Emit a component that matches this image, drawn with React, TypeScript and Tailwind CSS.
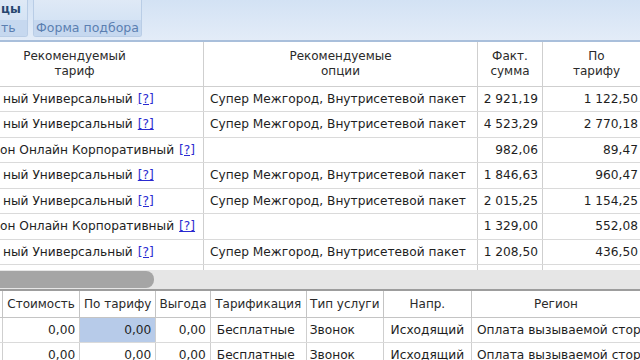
import React from "react";

const opts = "Супер Межгород, Внутрисетевой пакет";
const univ = "ный Универсальный";
const online = "он Онлайн Корпоративный";

const rows = [
  { t: univ, o: opts, f: "2 921,19", p: "1 122,50" },
  { t: univ, o: opts, f: "4 523,29", p: "2 770,18" },
  { t: online, o: "", f: "982,06", p: "89,47" },
  { t: univ, o: opts, f: "1 846,63", p: "960,47" },
  { t: univ, o: opts, f: "2 015,25", p: "1 154,25" },
  { t: online, o: "", f: "1 329,00", p: "552,08" },
  { t: univ, o: opts, f: "1 208,50", p: "436,50" },
];

const font = { fontFamily: "Tahoma, 'DejaVu Sans', sans-serif" };

function Ribbon() {
  return (
    <div className="h-[42px] flex items-start gap-[5px] bg-gradient-to-b from-[#d3e2f4] to-[#e3ecf8] border-b-2 border-[#a9bfdb]">
      <div className="w-[28px] h-[37px] flex flex-col justify-between rounded-br-[3px] bg-gradient-to-b from-[#dfe9f6] to-[#cddff3] border-r border-b border-[#b9cde6] overflow-hidden">
        <div className="text-[12px] font-bold text-[#27466f] leading-none pt-[3px] pl-[1px]">цы</div>
        <div className="h-[16px] bg-[#c6d8ef] text-[12.5px] text-[#5b7fb1] leading-[16px] pl-[1px]">ть</div>
      </div>
      <div className="w-[109px] h-[37px] flex flex-col justify-end rounded-b-[3px] bg-gradient-to-b from-[#dfe9f6] to-[#cddff3] border-x border-b border-[#b9cde6] overflow-hidden">
        <div className="h-[16px] bg-[#c6d8ef] text-[12.5px] text-[#5b7fb1] leading-[16px] text-center">Форма подбора</div>
      </div>
    </div>
  );
}

function MainTable() {
  return (
    <div className="h-[228px] overflow-hidden bg-white">
      <div className="-ml-[54px] w-[760px]">
        <div className="flex h-[45px] border-b border-[#cfcfcf] text-[12px] leading-[15px] text-[#2a2a2a] text-center">
          <div className="w-[258px] flex items-center justify-center border-r border-[#cfcfcf]">Рекомендуемый<br />тариф</div>
          <div className="w-[274px] flex items-center justify-center border-r border-[#cfcfcf]">Рекомендуемые<br />опции</div>
          <div className="w-[65px] flex items-center justify-center border-r border-[#cfcfcf]">Факт.<br />сумма</div>
          <div className="w-[108px] flex items-center justify-center border-r border-[#cfcfcf]">По<br />тарифу</div>
        </div>
        {rows.map((r, i) => (
          <div
            key={i}
            className={`flex border-b border-[#dadada] text-[12.2px] text-[#1e1e1e] ${i % 2 === 0 ? "h-[25px]" : "h-[26px]"}`}
          >
            <div className={`w-[258px] flex items-center border-r border-[#cfcfcf] whitespace-nowrap ${r.t === univ ? "pl-[57px]" : "pl-[54px]"}`}>
              {r.t}
              <span className="ml-[5px] text-[#2a2ad0] underline">[?]</span>
            </div>
            <div className="w-[274px] flex items-center pl-[6px] border-r border-[#cfcfcf] whitespace-nowrap">{r.o}</div>
            <div className="w-[65px] flex items-center justify-end pr-[4px] border-r border-[#cfcfcf]">{r.f}</div>
            <div className="w-[108px] flex items-center justify-end pr-[12px] border-r border-[#cfcfcf]">{r.p}</div>
          </div>
        ))}
        <div className="flex h-[10px]">
          <div className="w-[258px] border-r border-[#cfcfcf]" />
          <div className="w-[274px] border-r border-[#cfcfcf]" />
          <div className="w-[65px] border-r border-[#cfcfcf]" />
          <div className="w-[108px] border-r border-[#cfcfcf]" />
        </div>
      </div>
    </div>
  );
}

const bottomCols = [
  { w: "w-[3px]", h: "" },
  { w: "w-[78px]", h: "Стоимость" },
  { w: "w-[77px]", h: "По тарифу" },
  { w: "w-[55px]", h: "Выгода" },
  { w: "w-[97px]", h: "Тарификация" },
  { w: "w-[78px]", h: "Тип услуги" },
  { w: "w-[89px]", h: "Напр." },
  { w: "w-[170px]", h: "Регион" },
];

function BottomRow({ hl }: { hl: boolean }) {
  return (
    <div className="flex h-[25px] border-b border-[#dadada] text-[12.2px] text-[#1e1e1e] whitespace-nowrap">
      <div className="w-[3px] border-r border-[#cfcfcf]" />
      <div className="w-[78px] flex items-center justify-end pr-[4px] border-r border-[#cfcfcf]">0,00</div>
      <div className={`w-[77px] flex items-center justify-end pr-[4px] border-r border-[#cfcfcf] ${hl ? "bg-[#b7cbe9]" : ""}`}>0,00</div>
      <div className="w-[55px] flex items-center justify-end pr-[4px] border-r border-[#cfcfcf]">0,00</div>
      <div className="w-[97px] flex items-center pl-[6px] border-r border-[#cfcfcf]">Бесплатные</div>
      <div className="w-[78px] flex items-center pl-[3px] border-r border-[#cfcfcf]">Звонок</div>
      <div className="w-[89px] flex items-center justify-center border-r border-[#cfcfcf]">Исходящий</div>
      <div className="w-[170px] flex items-center pl-[5px] overflow-hidden">Оплата вызываемой стороны</div>
    </div>
  );
}

function BottomTable() {
  return (
    <div className="bg-white overflow-hidden">
      <div className="flex h-[27px] border-b border-[#c4c4c4] text-[12px] text-[#2a2a2a]">
        {bottomCols.map((c, i) => (
          <div key={i} className={`${c.w} flex items-center justify-center whitespace-nowrap ${i < bottomCols.length - 1 ? "border-r border-[#c4c4c4]" : ""}`}>
            {c.h}
          </div>
        ))}
      </div>
      <BottomRow hl />
      <BottomRow hl={false} />
    </div>
  );
}

export default function App() {
  return (
    <div className="w-[640px] h-[360px] overflow-hidden bg-white" style={font}>
      <Ribbon />
      <MainTable />
      <div className="h-[19px] bg-[#e6e6e6] flex items-center">
        <div className="w-[154px] h-[17px] bg-[#a5a5a5] rounded-r-[8px]" />
      </div>
      <div className="h-[2px] bg-[#9d9d9d]" />
      <BottomTable />
    </div>
  );
}
